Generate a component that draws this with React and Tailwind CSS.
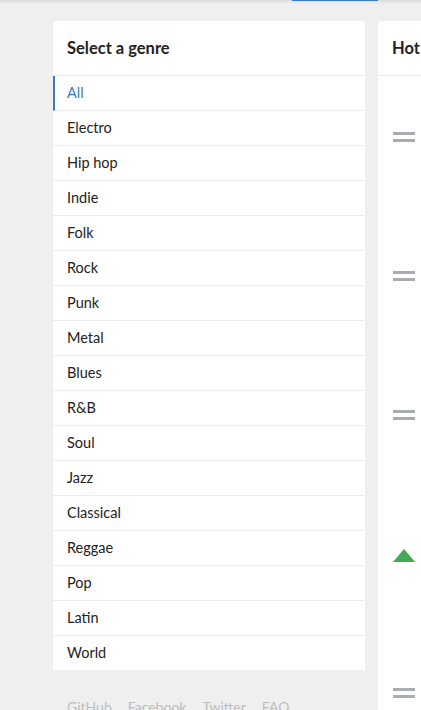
import React from 'react';

const genres = ['All', 'Electro', 'Hip hop', 'Indie', 'Folk', 'Rock', 'Punk', 'Metal', 'Blues', 'R&B', 'Soul', 'Jazz', 'Classical', 'Reggae', 'Pop', 'Latin', 'World'];

// trend markers in the "Hot" column
const trends = ['same', 'same', 'same', 'up', 'same'];

const Same = () => (
  <div className="flex flex-col gap-[4px] w-[22px]">
    <div className="h-[3px] bg-[#a9adb2]" />
    <div className="h-[3px] bg-[#a9adb2]" />
  </div>
);

const Up = () => (
  <svg width="22" height="13" viewBox="0 0 22 13">
    <polygon points="11,0 22,13 0,13" fill="#43a753" />
  </svg>
);

const App = () => {
  return (
    <div className="relative w-[421px] h-[710px] overflow-hidden bg-[#efefef]" style={{ fontFamily: 'Lato, "Noto Sans", sans-serif' }}>
      <div className="absolute top-0 left-0 right-0 h-[4px] bg-gradient-to-b from-[#dcdcdc] to-[#efefef]" />
      <div className="absolute top-0 left-[292px] w-[86px] h-[1px] bg-[#3a7bbf]" />
      <div className="flex gap-[13px] pl-[53px] pt-[21px]">
        <div className="w-[312px] shrink-0 flex flex-col">
          <div className="bg-white rounded-t-[3px]">
            <div className="h-[55px] flex items-center px-[14px] text-[16.5px] font-bold text-[#222] border-b border-[#ececec]">Select a genre</div>
            {genres.map((g, i) => (
              <div
                key={g}
                className={`flex items-center px-[14px] text-[14.5px] ${i < genres.length - 1 ? 'h-[35px] border-b border-[#ececec]' : 'h-[34px]'} ${i === 0 ? 'text-[#3a7bbf] border-l-2 border-l-[#3a7bbf] pl-[12px]' : 'text-[#222]'}`}
              >
                {g}
              </div>
            ))}
          </div>
          <div className="flex gap-[16px] pl-[14px] pt-[26px] text-[14px] text-[#bdbdbd]">
            <span>GitHub</span>
            <span>Facebook</span>
            <span>Twitter</span>
            <span>FAQ</span>
          </div>
        </div>
        <div className="w-[300px] shrink-0 bg-white rounded-t-[3px] h-[800px]">
          <div className="h-[55px] flex items-center px-[14px] text-[16.5px] font-bold text-[#222] border-b border-[#ececec]">Hot</div>
          <div className="flex flex-col pl-[15px]">
            {trends.map((t, i) => (
              <div key={i} className="h-[139px] flex items-start pt-[56px]">
                {t === 'up' ? <Up /> : <Same />}
              </div>
            ))}
          </div>
        </div>
      </div>
    </div>
  );
};

export default App;
